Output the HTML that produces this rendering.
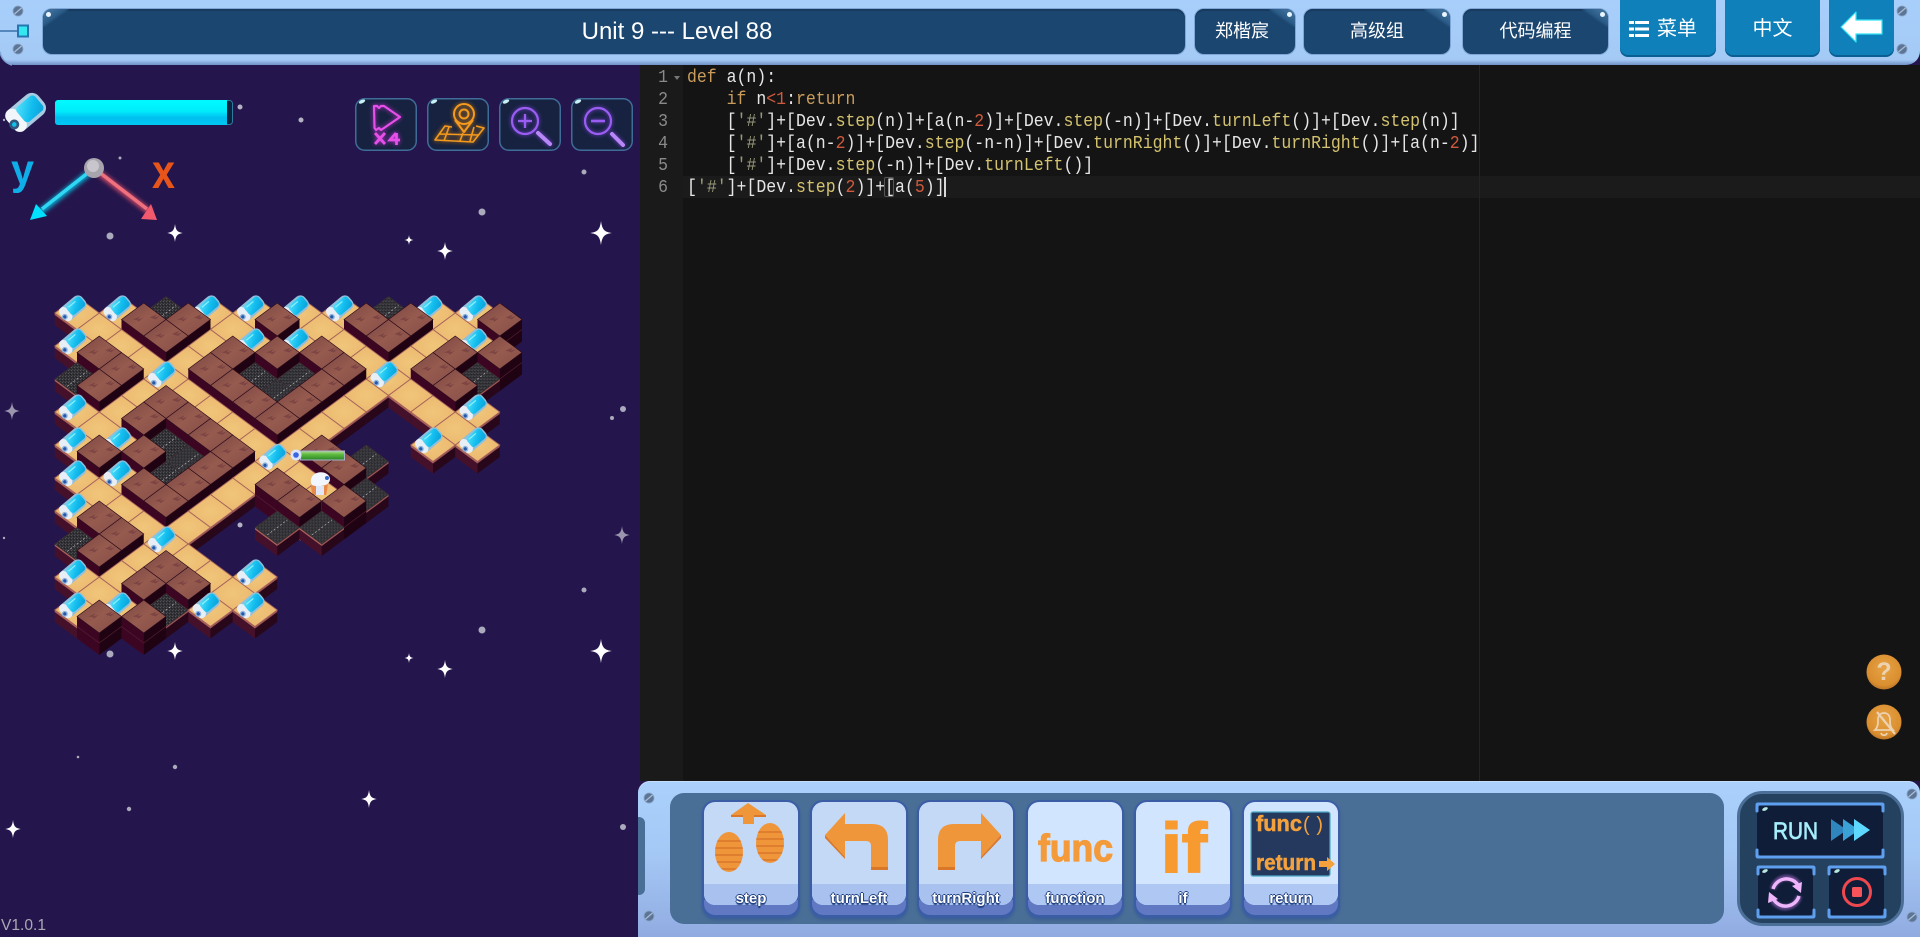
<!DOCTYPE html>
<html lang="zh">
<head>
<meta charset="utf-8">
<title>Unit 9 --- Level 88</title>
<style>
html,body{margin:0;padding:0;width:1920px;height:937px;overflow:hidden;background:#24164c;font-family:"Liberation Sans","Noto Sans CJK SC",sans-serif}
.a{position:absolute}
#stage{position:absolute;left:0;top:0;width:1920px;height:937px;overflow:hidden}
#top{left:0;top:0;width:1920px;height:65px;background:linear-gradient(#a8cffb,#a4c9f5 92%,#6f90c6);border-radius:0 0 14px 14px}
.pan{background:#1b4670;border-radius:9px;color:#fff;text-align:center;box-shadow:inset 0 2px 0 #173a5e,0 0 0 1px #7fa6d6;top:9px;height:45px;line-height:45px;font-size:18px;overflow:hidden}
.pan i{position:absolute;right:3px;top:3px;width:5px;height:5px;background:#eaf6ff;border-radius:50%}
.pan b{position:absolute;right:0;top:0;width:26px;height:18px;background:linear-gradient(215deg,#4c7ea8 0,#2a5a86 45%,transparent 55%);border-top-right-radius:9px}
.blu{background:#0f80ba;border-radius:0 0 8px 8px;top:0;height:55px;box-shadow:0 1px 0 #0a5f92,0 2px 0 #0a5f92;color:#fff;font-size:20px;line-height:58px;text-align:center}
#ed{left:640px;top:65px;width:1280px;height:716px;background:#141414}
#gut{left:640px;top:65px;width:43px;height:716px;background:#1a1a1a}
#act{left:683px;top:176px;width:1237px;height:22px;background:#1b1b1b}
#mar{left:1479px;top:65px;width:1px;height:716px;background:#242424}
.ln{position:absolute;left:638px;width:30px;text-align:right;color:#8a8a8a;font:18px/22px "Liberation Mono",monospace;height:22px;transform:scaleX(.915);transform-origin:right center}
.cd{position:absolute;left:687px;color:#e6e6e6;font:18px/22px "Liberation Mono",monospace;white-space:pre;height:22px;transform:scaleX(.917);transform-origin:left center}
.k{color:#c99c5c}.f{color:#d3c26f}.n{color:#cf5a3d}.s{color:#98987a}
#bot{left:638px;top:781px;width:1282px;height:156px;background:linear-gradient(#aad0fb,#a5c9f6 45%,#91abe1);border-radius:12px 12px 0 0;box-shadow:inset 0 1px 0 #c4defc}
#inner{left:670px;top:793px;width:1054px;height:131px;background:#4a6f97;border-radius:14px}
.card{position:absolute;top:800px;width:98px;height:118px;background:#3a5da6;border-radius:13px;box-shadow:0 2px 3px #3a5f95}
.card .t{position:absolute;left:2px;top:2px;width:94px;height:103px;border-radius:11px;overflow:hidden;background:#c3d9f6}
.card.l .t{background:#d2e5fe}
.card .lb{position:absolute;left:0;right:0;top:82px;height:21px;background:#a9c1ef}
.card.l .lb{background:#afc7f3}
.card .u{position:absolute;left:2px;top:100px;width:94px;height:15px;border-radius:0 0 11px 11px;background:#6079c2;z-index:0}
.card span{position:absolute;left:0;width:98px;top:89px;text-align:center;color:#fff;font-weight:bold;font-size:15px;line-height:19px;text-shadow:-1px 0 #1f3f80,1px 0 #1f3f80,0 -1px #1f3f80,0 1px #1f3f80,0 2px 1px #1f3f80;z-index:2}
svg{position:absolute;left:0;top:0;overflow:visible}
</style>
</head>
<body>
<div id="stage">

<!-- left scene -->
<svg width="640" height="937" viewBox="0 0 640 937" style="width:640px;height:937px">
<defs>
<path id="sp" d="M0-9C.8-2.5 2.5-.8 8 0 2.5.8.8 2.5 0 9-.8 2.5-2.5.8-8 0-2.5-.8-.8-2.5 0-9Z" fill="#fff"/>
<g id="sky">
<circle cx="240" cy="107" r="2.5" fill="#b3b3c4"/><circle cx="301" cy="120" r="2.5" fill="#b3b3c4"/><circle cx="110" cy="236" r="3.5" fill="#aaaabc"/><circle cx="482" cy="212" r="3.5" fill="#aaaabc"/><circle cx="584" cy="172" r="2.5" fill="#aaaabc"/><circle cx="120" cy="158" r="1.5" fill="#aaaabc"/><circle cx="4" cy="120" r="1.2" fill="#aaaabc"/><circle cx="623" cy="409" r="3" fill="#aaaabc"/>
<use href="#sp" transform="translate(175,233) scale(1)"/><use href="#sp" transform="translate(445,251) scale(1)"/><use href="#sp" transform="translate(601,233) scale(1.35)"/><use href="#sp" transform="translate(409,240) scale(.55)"/>
</g>
<radialGradient id="gp" cx=".5" cy=".5" r=".6"><stop offset="0" stop-color="#f0c67a"/><stop offset=".7" stop-color="#ecbb72"/><stop offset="1" stop-color="#e2a96a"/></radialGradient>
<linearGradient id="gw" x1="0" y1="0" x2="1" y2="1"><stop offset="0" stop-color="#7a4544"/><stop offset=".5" stop-color="#965b4e"/><stop offset="1" stop-color="#854d49"/></linearGradient>
<linearGradient id="cy" x1="0" y1="0" x2="1" y2="1"><stop offset="0" stop-color="#58e2fb"/><stop offset=".55" stop-color="#12bdee"/><stop offset="1" stop-color="#0a9fd8"/></linearGradient>
<pattern id="nz" width="3" height="3" patternUnits="userSpaceOnUse"><rect width="3" height="3" fill="#303035"/><rect width="1" height="1" fill="#525257"/><rect x="2" y="1" width="1" height="1" fill="#222226"/><rect x="1" y="2" width="1" height="1" fill="#444449"/></pattern>
<g id="s"><path d="M-22.25 0 0 16.5V28.5L-22.25 12Z" fill="#45102a"/><path d="M22.25 0 0 16.5V28.5L22.25 12Z" fill="#28071a"/><path d="M-22.25 0 0 16.5V18.5L-22.25 2Z" fill="#a9625c"/><path d="M22.25 0 0 16.5V18.5L22.25 2Z" fill="#9a5553"/></g>
<g id="P"><use href="#s"/><path d="M-22.25 0 0-16.5 22.25 0 0 16.5Z" fill="url(#gp)" stroke="#a5625b" stroke-width=".9"/></g>
<g id="B"><use href="#s"/><path d="M-22.25 0 0-16.5 22.25 0 0 16.5Z" fill="url(#nz)" stroke="#3a2c30" stroke-width=".6"/><path d="M-10 7.500 10-7.500" stroke="#c4c4c4" stroke-width=".6" stroke-dasharray="2 2"/></g>
<g id="C"><use href="#P"/><g transform="translate(-4,-5) rotate(-40)">
<rect x="-14" y="-8" width="28" height="16" rx="6" fill="#8fbfdc"/><rect x="-14" y="-8" width="9" height="16" rx="4.500" fill="#e8eef5"/><rect x="-5.500" y="-6" width="18" height="12" rx="3" fill="url(#cy)"/><path d="M-3-3.500H6" stroke="#8cf0fd" stroke-width="1.200"/><circle cx="-12" cy="1.500" r="3" fill="#8fb4dc"/><circle cx="-12" cy="1.500" r="1.600" fill="#2657a8"/></g></g>
<g id="W"><path d="M-22.25-10 0 6.5V28.5L-22.25 12Z" fill="#3c0623"/><path d="M22.25-10 0 6.5V28.5L22.25 12Z" fill="#200312"/><path d="M-22.25 0 0 16.5 22.25 0" fill="none" stroke="#5a2032" stroke-width=".6"/><path d="M-22.25-10 0-26.5 22.25-10 0 6.5Z" fill="url(#gw)" stroke="#2c0a18" stroke-width=".7"/><path d="M-11-10 -4-13-6-10-1-11.5-5-8-7-9.5Z M6-12 13-15 11-12 16-13.5 12-10 9-11Z" fill="#7c4443"/></g>
<filter id="gl" x="-40%" y="-40%" width="180%" height="180%"><feGaussianBlur stdDeviation="2.2"/></filter>
<filter id="gs" x="-30%" y="-30%" width="160%" height="160%"><feGaussianBlur stdDeviation="1"/></filter>
<linearGradient id="bar" x1="0" y1="0" x2="0" y2="1"><stop offset="0" stop-color="#00fbff"/><stop offset=".45" stop-color="#00ecfb"/><stop offset=".7" stop-color="#00bff0"/><stop offset="1" stop-color="#00c7f2"/></linearGradient>
<linearGradient id="hb" x1="0" y1="0" x2="0" y2="1"><stop offset="0" stop-color="#a7d98d"/><stop offset=".35" stop-color="#60bb3f"/><stop offset="1" stop-color="#2e8a2a"/></linearGradient>
<g id="sb"><rect x=".75" y=".75" width="60.5" height="51.5" rx="9" fill="#16223f" stroke="#3f6d98" stroke-width="1.5"/><ellipse cx="7" cy="3.6" rx="3.4" ry="1.7" fill="#c6f1f2" transform="rotate(-25 7 3.6)"/></g>
</defs>
<rect width="640" height="937" fill="#24164c"/>
<use href="#sky"/><use href="#sky" y="418"/>
<use href="#sp" transform="translate(369,799)"/><use href="#sp" transform="translate(13,829)"/>
<circle cx="78" cy="757" r="1.3" fill="#aaaabc"/><circle cx="175" cy="767" r="2.2" fill="#aaaabc"/><circle cx="129" cy="809" r="2.2" fill="#aaaabc"/>
<use href="#sp" transform="translate(12,411)" opacity=".55"/><use href="#sp" transform="translate(622,535)" opacity=".55"/>
<circle cx="612" cy="418" r="2" fill="#aaaabc"/>

<!-- iso map -->
<g transform="translate(0,313)"><use href="#C" x="77"/><use href="#C" x="121.5"/><use href="#B" x="166"/><use href="#C" x="210.5"/><use href="#C" x="255"/><use href="#C" x="299.5"/><use href="#C" x="344"/><use href="#B" x="388.5"/><use href="#C" x="433"/><use href="#C" x="477.5"/></g>
<g transform="translate(0,329.5)"><use href="#P" x="99.25"/><use href="#W" x="143.75"/><use href="#W" x="188.25"/><use href="#P" x="232.75"/><use href="#W" x="277.25"/><use href="#P" x="321.75"/><use href="#W" x="366.25"/><use href="#W" x="410.75"/><use href="#P" x="455.25"/><use href="#W" x="499.75"/></g>
<g transform="translate(0,346)"><use href="#C" x="77"/><use href="#P" x="121.5"/><use href="#W" x="166"/><use href="#P" x="210.5"/><use href="#C" x="255"/><use href="#C" x="299.5"/><use href="#P" x="344"/><use href="#W" x="388.5"/><use href="#P" x="433"/><use href="#C" x="477.5"/></g>
<g transform="translate(0,362.5)"><use href="#W" x="99.25"/><use href="#P" x="143.75"/><use href="#P" x="188.25"/><use href="#W" x="232.75"/><use href="#W" x="277.25"/><use href="#W" x="321.75"/><use href="#P" x="366.25"/><use href="#P" x="410.75"/><use href="#W" x="455.25"/><use href="#W" x="499.75"/></g>
<g transform="translate(0,379)"><use href="#B" x="77"/><use href="#W" x="121.5"/><use href="#C" x="166"/><use href="#W" x="210.5"/><use href="#B" x="255"/><use href="#B" x="299.5"/><use href="#W" x="344"/><use href="#C" x="388.5"/><use href="#W" x="433"/><use href="#B" x="477.5"/></g>
<g transform="translate(0,395.5)"><use href="#W" x="99.25"/><use href="#P" x="143.75"/><use href="#P" x="188.25"/><use href="#W" x="232.75"/><use href="#B" x="277.25"/><use href="#W" x="321.75"/><use href="#P" x="366.25"/><use href="#P" x="410.75"/><use href="#W" x="455.25"/></g>
<g transform="translate(0,412)"><use href="#C" x="77"/><use href="#P" x="121.5"/><use href="#W" x="166"/><use href="#P" x="210.5"/><use href="#W" x="255"/><use href="#W" x="299.5"/><use href="#P" x="344"/><use href="#P" x="433"/><use href="#C" x="477.5"/></g>
<g transform="translate(0,428.5)"><use href="#P" x="99.25"/><use href="#W" x="143.75"/><use href="#W" x="188.25"/><use href="#P" x="232.75"/><use href="#W" x="277.25"/><use href="#P" x="321.75"/><use href="#P" x="455.25"/></g>
<g transform="translate(0,445)"><use href="#C" x="77"/><use href="#C" x="121.5"/><use href="#B" x="166"/><use href="#W" x="210.5"/><use href="#P" x="255"/><use href="#P" x="299.5"/><use href="#C" x="433"/><use href="#C" x="477.5"/></g>
<g transform="translate(0,461.5)"><use href="#W" x="99.25"/><use href="#W" x="143.75"/><use href="#B" x="188.25"/><use href="#W" x="232.75"/><use href="#C" x="277.25"/><use href="#W" x="321.75"/><use href="#B" x="366.25"/></g>
<g transform="translate(0,478)"><use href="#C" x="77"/><use href="#C" x="121.5"/><use href="#B" x="166"/><use href="#W" x="210.5"/><use href="#P" x="255"/><use href="#P" x="299.5"/><use href="#W" x="344"/></g>
<g transform="translate(0,494.5)"><use href="#P" x="99.25"/><use href="#W" x="143.75"/><use href="#W" x="188.25"/><use href="#P" x="232.75"/><use href="#W" x="277.25"/><use href="#P" x="321.75"/><use href="#B" x="366.25"/></g>
<!-- robot -->
<g transform="translate(320,484)"><path d="M-7 11C-10 4-9-2-8-5H7C8-1 8 4 6 11H3L4 3H-4L-4 11Z" fill="#e9894a"/><path d="M-4 11V2H4V11Z" fill="#dfe7f6"/><path d="M-9-1C-11-14 9-15 10-5 10 1 3 2-1 2-5 2-9 2-9-1Z" fill="#f2f6ff"/><circle cx="7" cy="-6" r="2" fill="#3567c9"/></g>
<g transform="translate(0,511)"><use href="#C" x="77"/><use href="#P" x="121.5"/><use href="#W" x="166"/><use href="#P" x="210.5"/><use href="#W" x="299.5"/><use href="#W" x="344"/></g>
<g transform="translate(0,527.5)"><use href="#W" x="99.25"/><use href="#P" x="143.75"/><use href="#P" x="188.25"/><use href="#B" x="277.25"/><use href="#B" x="321.75"/></g>
<g transform="translate(0,544)"><use href="#B" x="77"/><use href="#W" x="121.5"/><use href="#C" x="166"/></g>
<g transform="translate(0,560.5)"><use href="#W" x="99.25"/><use href="#P" x="143.75"/><use href="#P" x="188.25"/></g>
<g transform="translate(0,577)"><use href="#C" x="77"/><use href="#P" x="121.5"/><use href="#W" x="166"/><use href="#P" x="210.5"/><use href="#C" x="255"/></g>
<g transform="translate(0,593.5)"><use href="#P" x="99.25"/><use href="#W" x="143.75"/><use href="#W" x="188.25"/><use href="#P" x="232.75"/></g>
<g transform="translate(0,610)"><use href="#C" x="77"/><use href="#C" x="121.5"/><use href="#B" x="166"/><use href="#C" x="210.5"/><use href="#C" x="255"/></g>
<g transform="translate(0,626.5)"><use href="#W" x="99.25"/><use href="#W" x="143.75"/></g>
<!-- health bar -->
<rect x="300" y="450.5" width="45" height="10" fill="#a9b1cd"/><rect x="301" y="451.5" width="43" height="8" fill="url(#hb)"/>
<circle cx="296" cy="455" r="5.5" fill="#dbe6f8"/><circle cx="296" cy="455" r="2.8" fill="#3a66e0"/>

<!-- energy -->
<g transform="translate(26,112) rotate(-40)"><rect x="-20" y="-13" width="40" height="26" rx="9" fill="#a8cbe2"/><rect x="-20" y="-13" width="14" height="26" rx="7" fill="#f2f5f9"/><rect x="-7" y="-9.500" width="24" height="19" rx="4" fill="url(#cy)"/><circle cx="-17" cy="2" r="5" fill="#33587e"/><circle cx="-17" cy="2" r="2.300" fill="#10c2ea"/></g>
<rect x="55.5" y="100.5" width="177" height="24" rx="3" fill="#0c2240" stroke="#2c7d9c"/>
<path d="M55 103a3 3 0 0 1 3-3H227V125H58a3 3 0 0 1-3-3Z" fill="url(#bar)"/>

<!-- tool buttons -->
<use href="#sb" x="355" y="98"/><use href="#sb" x="427" y="98"/><use href="#sb" x="499" y="98"/><use href="#sb" x="571" y="98"/>
<g fill="none" stroke="#e64fe8" stroke-width="2.200" style="filter:drop-shadow(0 0 2.500px #c030d0)">
<path d="M374 106H377L379 108 381 106H384L400 117 384 128 381 130 379 128 376 130 374.500 128Z" stroke-linejoin="round"/>
<path d="M375 133 385 144M385 133 375 144M396 133 390 140H400M396.500 133V145" stroke-width="2.800"/>
</g>
<g fill="none" stroke="#f49a1d" stroke-width="2" stroke-linejoin="round" style="filter:drop-shadow(0 0 2px #d07a10)">
<circle cx="464" cy="114" r="10"/><circle cx="464" cy="114" r="4.500"/>
<path d="M455 120 464 132 473 120"/>
<path d="M452 127 445 126 435 140 473 142 484 128 476 126M439 134 478 135M449 127 444 141M463 133 460 141M474 127 470 141" stroke-width="1.600"/>
</g>
<g fill="none" stroke="#9a5df2" stroke-width="2.200" style="filter:drop-shadow(0 0 2px #7a3fd8)">
<circle cx="525" cy="121" r="13"/><path d="M518 121H532M525 114V128"/><path d="M538 133 550 144" stroke="#b787f5" stroke-width="4" stroke-linecap="round"/>
<circle cx="598" cy="121" r="13"/><path d="M591 121H605" stroke-width="2.600"/><path d="M612 134 623 145" stroke="#b787f5" stroke-width="4" stroke-linecap="round"/>
</g>

<!-- axes -->
<text x="11" y="184" font-family="Liberation Sans,sans-serif" font-weight="bold" font-size="43" fill="#10aee8" textLength="23" lengthAdjust="spacingAndGlyphs">y</text>
<text x="152" y="188" font-family="Liberation Sans,sans-serif" font-weight="bold" font-size="48" fill="#e8551b" textLength="23" lengthAdjust="spacingAndGlyphs">x</text>
<g filter="url(#gl)" opacity=".75"><path d="M89 173 40 212" stroke="#00dfff" stroke-width="6"/><path d="M99 173 150 212" stroke="#ff5a70" stroke-width="6"/></g>
<path d="M89 172 42 209" stroke="#2fd7f5" stroke-width="3.500"/><path d="M99 172 147 209" stroke="#f0707e" stroke-width="3.500"/>
<path d="M30 220 36 204 47 216Z" fill="#00e0ff"/><path d="M157 220 141 219 151 204Z" fill="#f2596d"/>
<circle cx="94" cy="168" r="10" fill="#a8a4ae"/><circle cx="93" cy="166" r="6" fill="#c8c6cc"/>
<text x="1" y="930" font-family="Liberation Sans,sans-serif" font-size="15.500" fill="#aaa8b2" textLength="45" lengthAdjust="spacingAndGlyphs">V1.0.1</text>
</svg>

<!-- editor -->
<div class="a" id="ed"></div><div class="a" id="gut"></div><div class="a" id="act"></div><div class="a" id="mar"></div>
<div class="ln" style="top:67px">1</div><div class="ln" style="top:89px">2</div><div class="ln" style="top:111px">3</div><div class="ln" style="top:133px">4</div><div class="ln" style="top:155px">5</div><div class="ln" style="top:177px">6</div>
<div class="a" style="left:674px;top:76px;width:0;height:0;border:3px solid transparent;border-top:4px solid #777"></div>
<div class="cd" style="top:67px"><span class="k">def</span> a(n):</div>
<div class="cd" style="top:89px">    <span class="k">if</span> n<span class="n">&lt;1</span>:<span class="k">return</span></div>
<div class="cd" style="top:111px">    [<span class="s">'#'</span>]+[Dev.<span class="f">step</span>(n)]+[a(n-<span class="n">2</span>)]+[Dev.<span class="f">step</span>(-n)]+[Dev.<span class="f">turnLeft</span>()]+[Dev.<span class="f">step</span>(n)]</div>
<div class="cd" style="top:133px">    [<span class="s">'#'</span>]+[a(n-<span class="n">2</span>)]+[Dev.<span class="f">step</span>(-n-n)]+[Dev.<span class="f">turnRight</span>()]+[Dev.<span class="f">turnRight</span>()]+[a(n-<span class="n">2</span>)]</div>
<div class="cd" style="top:155px">    [<span class="s">'#'</span>]+[Dev.<span class="f">step</span>(-n)]+[Dev.<span class="f">turnLeft</span>()]</div>
<div class="cd" style="top:177px">[<span class="s">'#'</span>]+[Dev.<span class="f">step</span>(<span class="n">2</span>)]+[a(<span class="n">5</span>)]</div>
<div class="a" style="left:884px;top:177px;width:10px;height:20px;border:1px solid #555;box-sizing:border-box;border-radius:2px"></div>
<div class="a" style="left:944px;top:177px;width:1.500px;height:20px;background:#d8d8d8"></div>

<!-- help buttons -->
<svg width="1920" height="937" style="width:1920px;height:937px;pointer-events:none">
<defs><radialGradient id="or" cx=".5" cy=".4" r=".6"><stop offset="0" stop-color="#e6a244"/><stop offset=".8" stop-color="#da8f30"/><stop offset="1" stop-color="#bd7626"/></radialGradient>
<g id="scr"><circle r="5" fill="#5c7596" stroke="#88a3c6" stroke-width=".8"/><path d="M-3.500 3 3.500-3" stroke="#a8bcd4" stroke-width="1.300"/></g></defs>
<circle cx="1884" cy="672" r="17.500" fill="url(#or)"/><circle cx="1884" cy="722" r="17.500" fill="url(#or)"/>
<text x="1884" y="680" text-anchor="middle" font-family="Liberation Sans,sans-serif" font-weight="bold" font-size="25" fill="#ecd2b0">?</text>
<g fill="none" stroke="#ecd2b0" stroke-width="1.800"><path d="M1876 730H1893C1890 727 1890 724 1890 720 1890 716 1888 713 1884 713 1880 713 1878 716 1878 720 1878 724 1878 727 1875 730ZM1881 733C1882 736 1886 736 1887 733"/><path d="M1877 712 1895 734" stroke-width="2.200"/></g>
</svg>

<!-- top bar -->
<div class="a" id="top"></div>
<div class="a pan" style="left:43px;width:1142px;font-size:24px;line-height:46px;text-indent:126px"><b style="left:0;right:auto;background:linear-gradient(145deg,#4c7ea8 0,#2a5a86 45%,transparent 55%);border-radius:9px 0 0 0"></b><i style="left:3px;right:auto"></i>Unit 9 --- Level 88</div>
<div class="a pan" style="left:1195px;width:100px;text-indent:-6px"><b></b><i></i>郑楷宸</div>
<div class="a pan" style="left:1304px;width:146px"><b></b><i></i>高级组</div>
<div class="a pan" style="left:1463px;width:145px"><b></b><i></i>代码编程</div>
<div class="a blu" style="left:1620px;width:96px"><span style="position:absolute;left:37px;top:0;white-space:nowrap">菜单</span>
<span style="position:absolute;left:9px;top:21px;width:20px;height:16px;background:linear-gradient(#fff 0 3px,transparent 3px 6.500px,#fff 6.500px 9.500px,transparent 9.500px 13px,#fff 13px 16px)"></span>
<span style="position:absolute;left:13.500px;top:20px;width:1.500px;height:18px;background:#0f80ba"></span></div>
<div class="a blu" style="left:1725px;width:95px">中文</div>
<div class="a blu" style="left:1829px;width:65px"><svg width="65" height="55" style="width:65px;height:55px"><path d="M12 27 27 12V20H53V34H27V42Z" fill="#fff" stroke="#33e4f4" stroke-width="1.200" stroke-linejoin="round"/></svg></div>
<svg width="1920" height="70" style="width:1920px;height:70px">
<use href="#scr" x="18" y="11"/><use href="#scr" x="18" y="49"/><use href="#scr" x="1902" y="11"/><use href="#scr" x="1902" y="49"/>
<path d="M0 31H18" stroke="#3a6ea8" stroke-width="1.500"/><rect x="18" y="25.500" width="10" height="11" fill="#35e8f0" stroke="#2775b0" stroke-width="2"/>
<path d="M0 52Q2 62 12 65" fill="none" stroke="#7fa3d6" stroke-width="1.500"/>
</svg>

<!-- bottom panel -->
<div class="a" id="bot"></div>
<div class="a" id="inner"></div>
<div class="a" style="left:638px;top:817px;width:7px;height:78px;background:#4a6f97;border-radius:0 6px 6px 0"></div>

<div class="card" style="left:702px"><div class="u"></div><div class="t"><div class="lb"></div></div><span>step</span></div>
<div class="card" style="left:810px"><div class="u"></div><div class="t"><div class="lb"></div></div><span>turnLeft</span></div>
<div class="card" style="left:917px"><div class="u"></div><div class="t"><div class="lb"></div></div><span>turnRight</span></div>
<div class="card l" style="left:1026px"><div class="u"></div><div class="t"><div class="lb"></div></div><span>function</span></div>
<div class="card l" style="left:1134px"><div class="u"></div><div class="t"><div class="lb"></div></div><span>if</span></div>
<div class="card l" style="left:1242px"><div class="u"></div><div class="t"><div class="lb"></div></div><span>return</span></div>

<svg width="1920" height="937" style="width:1920px;height:937px">
<defs><clipPath id="f1"><ellipse cx="729" cy="852" rx="14" ry="20"/></clipPath><clipPath id="f2"><ellipse cx="770" cy="843" rx="14" ry="20"/></clipPath></defs>
<use href="#scr" x="649" y="798"/><use href="#scr" x="649" y="916"/><use href="#scr" x="1912" y="794"/><use href="#scr" x="1912" y="917"/>
<!-- step -->
<ellipse cx="729" cy="852" rx="14" ry="20" fill="#ef963b"/><ellipse cx="770" cy="843" rx="14" ry="20" fill="#ef963b"/>
<g clip-path="url(#f1)" stroke="#d9772a" stroke-width="1.500"><path d="M710 841H750M710 848H750M710 855H750M710 862H750M710 869H750"/></g>
<g clip-path="url(#f2)" stroke="#d9772a" stroke-width="1.500"><path d="M752 832H790M752 839H790M752 846H790M752 853H790M752 860H790"/></g>
<path d="M748 803 766 815H754V824H743V815H731Z" fill="#ef963b"/><path d="M731 815H743V817H731ZM754 815H766V817H754Z" fill="#d9772a"/>
<!-- turnLeft -->
<path d="M825 835 845 813V824H872Q888 824 888 840V870H871V846Q871 841 866 841H845V857Z" fill="#ef963b"/><path d="M871 867H888V870H871Z" fill="#d9772a"/><path d="M825 835 845 857V859L825 838Z" fill="#d9772a"/>
<!-- turnRight -->
<path d="M1001 835 981 813V824H954Q938 824 938 840V870H955V846Q955 841 960 841H981V857Z" fill="#ef963b"/><path d="M955 867H938V870H955Z" fill="#d9772a"/><path d="M1001 835 981 857V859L1001 838Z" fill="#d9772a"/>
<!-- func -->
<text x="1038" y="861" font-family="Liberation Sans,sans-serif" font-weight="bold" font-size="38" fill="#f39a3b" stroke="#f39a3b" stroke-width="1.200" textLength="75" lengthAdjust="spacingAndGlyphs">func</text>
<!-- if -->
<text x="1161" y="872" font-family="Liberation Sans,sans-serif" font-weight="bold" font-size="70" fill="#f79a2f" stroke="#f79a2f" stroke-width="2" textLength="46" lengthAdjust="spacingAndGlyphs">if</text>
<!-- return icon -->
<rect x="1251" y="812" width="79" height="64" rx="2" fill="#25395f" stroke="#4aa9c4" stroke-width="1.200"/>
<text x="1256" y="831" font-family="Liberation Sans,sans-serif" font-weight="bold" font-size="22" fill="#f3a13d" stroke="#f3a13d" stroke-width=".5" textLength="46" lengthAdjust="spacingAndGlyphs">func</text>
<text x="1303" y="831" font-family="Liberation Sans,sans-serif" font-size="20" fill="#f3a13d" textLength="20" lengthAdjust="spacing">( )</text>
<text x="1256" y="870" font-family="Liberation Sans,sans-serif" font-weight="bold" font-size="22" fill="#f3a13d" stroke="#f3a13d" stroke-width=".5" textLength="60" lengthAdjust="spacingAndGlyphs">return</text>
<path d="M1319 861H1327V857L1335 864 1327 871V867H1319Z" fill="#f3a13d"/>

<!-- run panel -->
<rect x="1738.500" y="792.500" width="164" height="132" rx="24" fill="#24415f" stroke="#4c6f98" stroke-width="3"/>
<g fill="#0f1d38"><rect x="1757" y="805" width="126" height="51" rx="6"/><rect x="1758" y="868" width="55" height="48" rx="5"/><rect x="1829" y="868" width="55" height="48" rx="5"/></g>
<g fill="none" stroke="#5f9ff0" stroke-width="3" stroke-linecap="round">
<path d="M1757 811V805Q1757 804 1758 804H1882Q1883 804 1883 805V811M1757 850V856Q1757 857 1758 857H1882Q1883 857 1883 856V850"/>
<path d="M1758 874V868Q1758 867 1759 867H1813Q1814 867 1814 868V874M1758 910V916Q1758 917 1759 917H1813Q1814 917 1814 916V910"/>
<path d="M1829 874V868Q1829 867 1830 867H1884Q1885 867 1885 868V874M1829 910V916Q1829 917 1830 917H1884Q1885 917 1885 916V910"/>
</g>
<ellipse cx="1765" cy="809" rx="3" ry="1.600" fill="#b5e8de" transform="rotate(-25 1765 809)"/><ellipse cx="1765" cy="871" rx="3" ry="1.600" fill="#b5e8de" transform="rotate(-25 1765 871)"/><ellipse cx="1837" cy="871" rx="3" ry="1.600" fill="#b5e8de" transform="rotate(-25 1837 871)"/>
<text x="1773" y="839" font-family="Liberation Sans,sans-serif" font-size="24" fill="#a6eefc" stroke="#a6eefc" stroke-width=".7" textLength="45" lengthAdjust="spacingAndGlyphs">RUN</text>
<path d="M1831 819 1847 830 1831 841Z" fill="#2f85bd"/><path d="M1843 819 1859 830 1843 841Z" fill="#3ba2d8"/><path d="M1854 819 1870 830 1854 841Z" fill="#5fd8ff"/>
<g fill="none" stroke="#c77bf0" stroke-width="6" opacity=".45" filter="url(#gs)"><path d="M1773 889A14 14 0 0 1 1799 885M1799 896A14 14 0 0 1 1773 900"/></g>
<g fill="none" stroke="#eeb5fa" stroke-width="3.500"><path d="M1773 889A14 14 0 0 1 1798 885M1799 896A14 14 0 0 1 1774 900"/></g>
<path d="M1802 882 1801 893 1792 886Z M1768 903 1769 892 1778 899Z" fill="#eeb5fa"/>
<circle cx="1857" cy="892" r="13.500" fill="none" stroke="#f0484f" stroke-width="3"/><rect x="1852" y="887" width="10" height="10" rx="1.500" fill="#f6545a"/>
</svg>

</div>
</body>
</html>
